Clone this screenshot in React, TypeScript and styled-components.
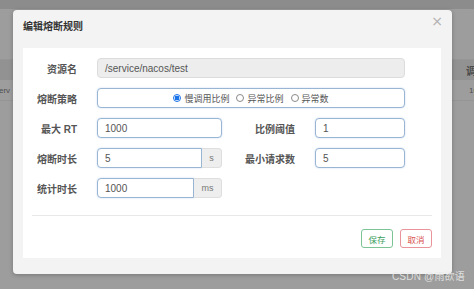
import React from "react";
import styled, { createGlobalStyle } from "styled-components";

const Global = createGlobalStyle`
  html, body { margin: 0; padding: 0; }
  body {
    width: 474px; height: 289px; overflow: hidden;
    font-family: "Liberation Sans", "Noto Sans CJK SC", Arial, sans-serif;
    background: #9c9c9c;
  }
`;

const Page = styled.div`
  position: relative;
  width: 474px;
  height: 289px;
  overflow: hidden;
  background: #9d9d9d;
`;

const TopBar = styled.div`
  height: 9px;
  background: #8c8c8c;
`;

const Spacer = styled.div<{ h: number }>`
  height: ${(p) => p.h}px;
  border-bottom: 1px solid #959595;
`;

const TableHead = styled.div`
  height: 20px;
  background: #929292;
  display: flex;
  justify-content: flex-end;
  align-items: center;
  font-size: 10px;
  font-weight: 700;
  color: #4a4a4a;
`;

const TableRow = styled.div`
  height: 20px;
  display: flex;
  justify-content: space-between;
  align-items: center;
  font-size: 8px;
  color: #505050;
  border-bottom: 1px solid #959595;
`;

const Clip = styled.span<{ shift: number }>`
  margin-left: ${(p) => p.shift}px;
  margin-right: ${(p) => -p.shift}px;
`;

const Overlay = styled.div`
  position: absolute;
  inset: 0;
  padding: 10px 0 0 13px;
`;

const Modal = styled.div`
  width: 439px;
  height: 264px;
  box-sizing: border-box;
  background: #f3f3f3;
  border-radius: 4px;
  box-shadow: 0 1px 4px rgba(0, 0, 0, 0.25);
  display: flex;
  flex-direction: column;
`;

const Header = styled.div`
  height: 38px;
  display: flex;
  justify-content: space-between;
  align-items: flex-start;
  padding: 0 9px 0 10px;
`;

const Title = styled.div`
  margin-top: 11px;
  font-size: 10px;
  line-height: 12px;
  font-weight: 700;
  color: #333;
`;

const Close = styled.div`
  margin-top: 4px;
  font-size: 14px;
  line-height: 14px;
  color: #b0b0b0;
  font-family: "DejaVu Sans", sans-serif;
`;

const Card = styled.div`
  margin: 0 11px 0 10px;
  height: 210px;
  background: #fff;
  box-sizing: border-box;
  padding: 10px 9px 0 0;
  display: flex;
  flex-direction: column;
`;

const Form = styled.div`
  display: grid;
  grid-template-columns: 54px 125px 53px 90px;
  column-gap: 20px;
  row-gap: 10px;
  grid-auto-rows: 20px;
  align-items: center;
`;

const Label = styled.div`
  text-align: right;
  font-size: 10px;
  font-weight: 700;
  color: #555;
  white-space: nowrap;
`;

const Full = styled.div`
  grid-column: 2 / -1;
  height: 20px;
`;

const Input = styled.div<{ disabled?: boolean; joined?: boolean }>`
  height: 20px;
  box-sizing: border-box;
  display: flex;
  align-items: center;
  padding-left: 7px;
  font-size: 10px;
  color: #555;
  flex: 1;
  border: 1px solid ${(p) => (p.disabled ? "#dcdcdc" : "#98b6d4")};
  background: ${(p) => (p.disabled ? "#ededed" : "#fff")};
  border-radius: ${(p) => (p.joined ? "4px 0 0 4px" : "4px")};
  box-shadow: ${(p) => (p.disabled ? "none" : "0 0 2px rgba(102,150,210,0.35)")};
`;

const Group = styled.div`
  display: flex;
  height: 20px;
`;

const Addon = styled.div<{ w: number }>`
  width: ${(p) => p.w}px;
  box-sizing: border-box;
  display: flex;
  align-items: center;
  justify-content: center;
  background: #eeeeee;
  border: 1px solid #dedede;
  border-left: none;
  border-radius: 0 4px 4px 0;
  font-size: 9px;
  color: #777;
`;

const RadioBox = styled(Input)`
  justify-content: center;
  padding-left: 0;
  gap: 7px;
`;

const RadioItem = styled.label`
  display: flex;
  align-items: center;
  gap: 3px;
  font-size: 9px;
  color: #555;
`;

const Dot = styled.span<{ on?: boolean }>`
  width: 8px;
  height: 8px;
  box-sizing: border-box;
  border-radius: 50%;
  border: 1px solid ${(p) => (p.on ? "#1a73e8" : "#8a8a8a")};
  background: ${(p) => (p.on ? "radial-gradient(circle, #1a73e8 0 2.2px, #fff 2.6px)" : "#fff")};
`;

const Divider = styled.div`
  margin: 17px 0 0 9px;
  height: 1px;
  background: #e8e8e8;
`;

const Actions = styled.div`
  display: flex;
  justify-content: flex-end;
  gap: 7px;
  margin-top: 13px;
`;

const Btn = styled.button<{ tone: "ok" | "cancel" }>`
  width: 32px;
  height: 19px;
  padding: 0;
  box-sizing: border-box;
  background: #fff;
  border-radius: 3px;
  font-family: inherit;
  font-size: 8.5px;
  border: 1px solid ${(p) => (p.tone === "ok" ? "#7cc496" : "#e8949a")};
  color: ${(p) => (p.tone === "ok" ? "#3aa05e" : "#d9534f")};
`;

const Watermark = styled.div`
  position: absolute;
  right: 9px;
  bottom: 6px;
  font-size: 10px;
  color: rgba(235, 235, 235, 0.85);
  letter-spacing: 0.2px;
`;

export default function App() {
  return (
    <>
      <Global />
      <Page>
        <TopBar />
        <Spacer h={50} />
        <TableHead>
          <Clip shift={2}>调</Clip>
        </TableHead>
        <TableRow>
          <Clip shift={-5}>serv</Clip>
          <Clip shift={4}>10</Clip>
        </TableRow>
        <Overlay>
          <Modal>
            <Header>
              <Title>编辑熔断规则</Title>
              <Close>×</Close>
            </Header>
            <Card>
              <Form>
                <Label>资源名</Label>
                <Full>
                  <Input disabled>/service/nacos/test</Input>
                </Full>

                <Label>熔断策略</Label>
                <Full>
                  <RadioBox>
                    <RadioItem>
                      <Dot on />
                      慢调用比例
                    </RadioItem>
                    <RadioItem>
                      <Dot />
                      异常比例
                    </RadioItem>
                    <RadioItem>
                      <Dot />
                      异常数
                    </RadioItem>
                  </RadioBox>
                </Full>

                <Label>最大 RT</Label>
                <Group>
                  <Input>1000</Input>
                </Group>
                <Label>比例阈值</Label>
                <Group>
                  <Input>1</Input>
                </Group>

                <Label>熔断时长</Label>
                <Group>
                  <Input joined>5</Input>
                  <Addon w={20}>s</Addon>
                </Group>
                <Label>最小请求数</Label>
                <Group>
                  <Input>5</Input>
                </Group>

                <Label>统计时长</Label>
                <Group>
                  <Input joined>1000</Input>
                  <Addon w={28}>ms</Addon>
                </Group>
              </Form>
              <Divider />
              <Actions>
                <Btn tone="ok">保存</Btn>
                <Btn tone="cancel">取消</Btn>
              </Actions>
            </Card>
          </Modal>
        </Overlay>
        <Watermark>CSDN @雨欲语</Watermark>
      </Page>
    </>
  );
}
